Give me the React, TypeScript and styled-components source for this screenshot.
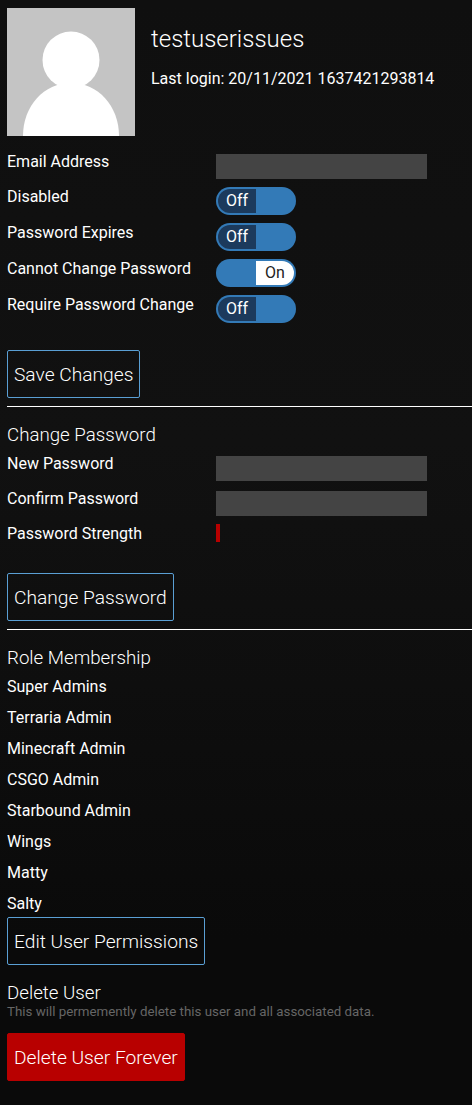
import React from "react";
import styled, { createGlobalStyle } from "styled-components";

const GlobalStyle = createGlobalStyle`
  html, body {
    margin: 0;
    padding: 0;
    background: #0c0c0c;
  }
  body {
    font-family: Roboto, "Liberation Sans", sans-serif;
    color: #fff;
  }
`;

const Page = styled.div`
  width: 472px;
  height: 1105px;
  box-sizing: border-box;
  padding: 8px 0 0 7px;
  overflow: hidden;
  background: linear-gradient(180deg, #0f0f0f 0%, #111111 40%, #0e0e0e 62%, #0a0a0a 85%, #0a0a0a 100%);
`;

const Profile = styled.div`
  display: flex;
  height: 128px;
  margin-bottom: 18px;
`;

const Avatar = styled.svg`
  width: 128px;
  height: 128px;
  flex: none;
`;

const ProfileText = styled.div`
  padding: 17px 0 0 16px;
`;

const UserName = styled.div`
  font-size: 24px;
  font-weight: 300;
  line-height: 28px;
`;

const LastLogin = styled.div`
  font-size: 16px;
  font-weight: 400;
  line-height: 19px;
  margin-top: 16px;
`;

const FormRow = styled.div<{ $height?: number; $gap?: number }>`
  display: grid;
  grid-template-columns: 209px 1fr;
  height: ${(props) => props.$height ?? 28}px;
  margin-bottom: ${(props) => props.$gap ?? 8}px;
`;

const Label = styled.div<{ $top?: number }>`
  font-size: 16px;
  font-weight: 400;
  line-height: 19px;
  margin-top: ${(props) => props.$top ?? 0}px;
`;

const TextField = styled.div`
  width: 211px;
  height: 25px;
  background: #444444;
`;

const ToggleBody = styled.div<{ $on?: boolean }>`
  display: flex;
  justify-content: ${(props) => (props.$on ? "flex-end" : "flex-start")};
  box-sizing: border-box;
  width: 80px;
  height: 28px;
  padding: 2px;
  border-radius: 14px;
  background: #337ab7;
`;

const ToggleHandle = styled.div<{ $on?: boolean }>`
  display: flex;
  align-items: center;
  justify-content: center;
  box-sizing: border-box;
  width: 38px;
  height: 24px;
  padding-bottom: 2px;
  font-size: 16px;
  color: ${(props) => (props.$on ? "#222222" : "#ffffff")};
  background: ${(props) => (props.$on ? "#ffffff" : "#1c3a5c")};
  border-radius: ${(props) => (props.$on ? "0 12px 12px 0" : "12px 0 0 12px")};
`;

const Button = styled.div<{ $danger?: boolean; $top?: number }>`
  display: inline-block;
  box-sizing: border-box;
  height: 48px;
  margin-top: ${(props) => props.$top ?? 0}px;
  padding: 0 6px;
  font-size: 19.2px;
  font-weight: 300;
  line-height: 48px;
  border: 1px solid ${(props) => (props.$danger ? "#b80000" : "#5a9fd4")};
  border-radius: 2px;
  background: ${(props) => (props.$danger ? "#b80000" : "transparent")};
`;

const Divider = styled.div`
  height: 1px;
  margin-top: 8px;
  background: #ffffff;
`;

const Heading = styled.div<{ $top: number; $bottom?: number }>`
  font-size: 18.72px;
  font-weight: 300;
  line-height: 22px;
  margin-top: ${(props) => props.$top}px;
  margin-bottom: ${(props) => props.$bottom ?? 0}px;
`;

const StrengthBar = styled.div`
  width: 4px;
  height: 18px;
  background: #b80000;
`;

const RoleList = styled.div`
  display: flex;
  flex-direction: column;
  gap: 12px;
  margin-bottom: 4px;
`;

const Role = styled.div`
  font-size: 16px;
  font-weight: 400;
  line-height: 19px;
`;

const Hint = styled.div`
  font-size: 13.33px;
  line-height: 15px;
  color: #666666;
`;

const Toggle = ({ on }: { on?: boolean }) => (
  <ToggleBody $on={on}>
    <ToggleHandle $on={on}>{on ? "On" : "Off"}</ToggleHandle>
  </ToggleBody>
);

const roles = [
  "Super Admins",
  "Terraria Admin",
  "Minecraft Admin",
  "CSGO Admin",
  "Starbound Admin",
  "Wings",
  "Matty",
  "Salty",
];

const App = () => (
  <Page>
    <GlobalStyle />
    <Profile>
      <Avatar viewBox="0 0 128 128">
        <rect width="128" height="128" fill="#c4c4c4" />
        <circle cx="64" cy="52" r="28.5" fill="#fff" />
        <path d="M16 128C16 98 37 75 64 75s48 23 48 53z" fill="#fff" />
      </Avatar>
      <ProfileText>
        <UserName>testuserissues</UserName>
        <LastLogin>Last login: 20/11/2021 1637421293814</LastLogin>
      </ProfileText>
    </Profile>

    <FormRow $height={25}>
      <Label $top={-2}>Email Address</Label>
      <TextField />
    </FormRow>
    <FormRow>
      <Label>Disabled</Label>
      <Toggle />
    </FormRow>
    <FormRow>
      <Label>Password Expires</Label>
      <Toggle />
    </FormRow>
    <FormRow>
      <Label>Cannot Change Password</Label>
      <Toggle on />
    </FormRow>
    <FormRow>
      <Label>Require Password Change</Label>
      <Toggle />
    </FormRow>

    <Button $top={19}>Save Changes</Button>
    <Divider />

    <Heading $top={17} $bottom={10}>
      Change Password
    </Heading>
    <FormRow $height={25} $gap={10}>
      <Label $top={-2}>New Password</Label>
      <TextField />
    </FormRow>
    <FormRow $height={25}>
      <Label $top={-2}>Confirm Password</Label>
      <TextField />
    </FormRow>
    <FormRow $height={18}>
      <Label>Password Strength</Label>
      <StrengthBar />
    </FormRow>

    <Button $top={23}>Change Password</Button>
    <Divider />

    <Heading $top={17} $bottom={8}>
      Role Membership
    </Heading>
    <RoleList>
      {roles.map((role) => (
        <Role key={role}>{role}</Role>
      ))}
    </RoleList>
    <Button>Edit User Permissions</Button>

    <Heading $top={17}>Delete User</Heading>
    <Hint>This will permemently delete this user and all associated data.</Hint>
    <Button $danger $top={14}>
      Delete User Forever
    </Button>
  </Page>
);

export default App;
